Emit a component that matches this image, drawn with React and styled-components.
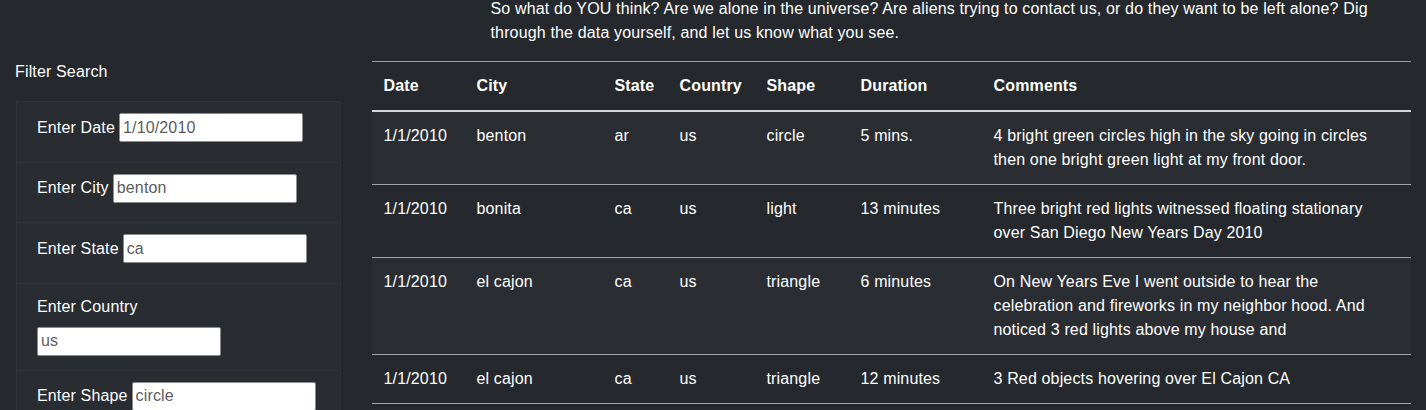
import React from "react";
import styled, { createGlobalStyle } from "styled-components";

const FONT = `"Liberation Sans", Arial, sans-serif`;

const GlobalStyle = createGlobalStyle`
  html, body {
    margin: 0;
    padding: 0;
    background: #25292d;
    color: #ffffff;
    font-family: ${FONT};
    font-size: 16px;
    line-height: 24px;
    letter-spacing: 0.15px;
    overflow: hidden;
  }
  * { box-sizing: border-box; }
`;

const Page = styled.div`
  display: flex;
  align-items: flex-start;
  width: 1426px;
  height: 410px;
  overflow: hidden;
`;

const Sidebar = styled.aside`
  flex: 0 0 25%;
  padding: 60px 15px 0;
`;

const SidebarTitle = styled.div`
  font-size: 16px;
  line-height: 24px;
  margin-bottom: 17px;
`;

const FieldList = styled.ul`
  list-style: none;
  margin: 0 1px;
  padding: 0;
`;

const FieldItem = styled.li`
  display: flex;
  flex-wrap: wrap;
  align-items: baseline;
  column-gap: 4px;
  min-height: 61px;
  padding: 11px 20px 14px;
  background: #292d32;
  border: 1px solid #2f3338;
  & + & {
    margin-top: -1px;
  }
`;

const FieldLabel = styled.label`
  font-size: 16px;
  line-height: 24px;
  margin: 0 0 8px;
  white-space: nowrap;
`;

const FieldInput = styled.input`
  width: 184px;
  height: 29px;
  margin: 0;
  padding: 1px 3px;
  font-family: ${FONT};
  font-size: 16px;
  letter-spacing: 0.15px;
  color: #5c5c5c;
  background: #ffffff;
  border: 1px solid #8d8d8d;
  border-radius: 2px;
  outline: none;
`;

const Main = styled.main`
  flex: 0 0 75%;
  padding: 0 15px;
  margin-top: -3px;
`;

const Intro = styled.p`
  margin: 0 0 16px;
  padding-left: 119px;
  font-size: 16px;
  line-height: 24px;
`;

const Table = styled.table`
  width: 100%;
  table-layout: fixed;
  border-collapse: collapse;
  font-size: 16px;
  line-height: 24px;
`;

const HeadCell = styled.th`
  text-align: left;
  font-weight: 700;
  padding: 12px;
  border-top: 1px solid #9a9ea2;
  border-bottom: 2px solid #d4d6d8;
  vertical-align: bottom;
`;

const Row = styled.tr`
  background: ${(p) => (p.$striped ? "#2a2e33" : "transparent")};
`;

const Cell = styled.td`
  padding: 12px ${(p) => (p.$wide ? "18px" : "12px")} 12px 12px;
  border-top: 1px solid #a2a5a9;
  border-bottom: 1px solid #a2a5a9;
  vertical-align: top;
`;

const fields = [
  { label: "Enter Date", value: "1/10/2010" },
  { label: "Enter City", value: "benton" },
  { label: "Enter State", value: "ca" },
  { label: "Enter Country", value: "us" },
  { label: "Enter Shape", value: "circle" },
];

const columns = [
  { name: "Date", width: 93 },
  { name: "City", width: 138 },
  { name: "State", width: 65 },
  { name: "Country", width: 87 },
  { name: "Shape", width: 94 },
  { name: "Duration", width: 133 },
  { name: "Comments", width: null },
];

const rows = [
  ["1/1/2010", "benton", "ar", "us", "circle", "5 mins.", "4 bright green circles high in the sky going in circles then one bright green light at my front door."],
  ["1/1/2010", "bonita", "ca", "us", "light", "13 minutes", "Three bright red lights witnessed floating stationary over San Diego New Years Day 2010"],
  ["1/1/2010", "el cajon", "ca", "us", "triangle", "6 minutes", "On New Years Eve I went outside to hear the celebration and fireworks in my neighbor hood. And noticed 3 red lights above my house and"],
  ["1/1/2010", "el cajon", "ca", "us", "triangle", "12 minutes", "3 Red objects hovering over El Cajon CA"],
];

export default function App() {
  return (
    <>
      <GlobalStyle />
      <Page>
        <Sidebar>
          <SidebarTitle>Filter Search</SidebarTitle>
          <FieldList>
            {fields.map((f) => (
              <FieldItem key={f.label}>
                <FieldLabel>{f.label}</FieldLabel>
                <FieldInput type="text" defaultValue={f.value} />
              </FieldItem>
            ))}
          </FieldList>
        </Sidebar>
        <Main>
          <Intro>
            So what do YOU think? Are we alone in the universe? Are aliens trying to contact us, or do they want to be left alone? Dig through the data yourself, and let us know what you see.
          </Intro>
          <Table>
            <colgroup>
              {columns.map((c) => (
                <col key={c.name} style={c.width ? { width: c.width } : undefined} />
              ))}
            </colgroup>
            <thead>
              <tr>
                {columns.map((c) => (
                  <HeadCell key={c.name}>{c.name}</HeadCell>
                ))}
              </tr>
            </thead>
            <tbody>
              {rows.map((r, i) => (
                <Row key={i} $striped={i % 2 === 0}>
                  {r.map((v, j) => (
                    <Cell key={j} $wide={j === r.length - 1}>{v}</Cell>
                  ))}
                </Row>
              ))}
            </tbody>
          </Table>
        </Main>
      </Page>
    </>
  );
}
